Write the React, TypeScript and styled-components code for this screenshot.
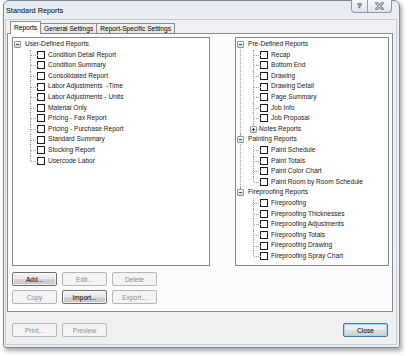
import React from 'react';
import styled, { createGlobalStyle, css } from 'styled-components';

const ROW = 10.6;
const FONT = '"Liberation Sans", Arial, sans-serif';

const Global = createGlobalStyle`
  html, body { margin: 0; padding: 0; background: #ffffff; }
  body { width: 408px; height: 356px; overflow: hidden; font-family: ${FONT}; }
  * { box-sizing: border-box; }
`;

const Window = styled.div`
  margin-left: 3px;
  width: 397px;
  height: 348px;
  border: 1px solid #7d8a97;
  border-radius: 6px 6px 3px 3px;
  background: linear-gradient(#e3eaf1, #edf1f5 22px, #eef1f4);
  box-shadow: 2px 3px 4px rgba(0, 0, 0, 0.35);
  display: flex;
  flex-direction: column;
  padding: 0 3px 3px 2px;
`;

const TitleBar = styled.div`
  height: 19px;
  display: flex;
  align-items: flex-start;
  flex-shrink: 0;
`;

const Title = styled.div`
  align-self: center;
  font-size: 7.3px;
  color: #000;
  padding-left: 0;
  margin-top: 0;
`;

const CaptionButtons = styled.div`
  display: flex;
  margin: -1px 4px 0 auto;
  height: 13px;
  border: 1px solid #8e9baa;
  border-top: none;
  border-radius: 0 0 4px 4px;
  overflow: hidden;
  background: linear-gradient(#f6f8fb, #dde4eb);
`;

const CaptionButton = styled.div<{ $w: number; $sep?: boolean }>`
  width: ${p => p.$w}px;
  height: 100%;
  display: flex;
  align-items: center;
  justify-content: center;
  ${p => p.$sep && css`border-right: 1px solid #8e9baa;`}
`;

const HelpGlyph = styled.span`
  font-size: 8px;
  font-weight: bold;
  color: #f4f6f8;
  -webkit-text-stroke: 0.7px #6d7882;
  line-height: 1;
`;

const Client = styled.div`
  flex: 1;
  background: #f0f0f0;
  box-shadow: 0 0 0 1px #c3ccd5;
  display: flex;
  flex-direction: column;
`;

const TabControl = styled.div`
  margin: 1px 3px 0 1px;
  display: flex;
  flex-direction: column;
`;

const TabStrip = styled.div`
  height: 12px;
  display: flex;
  align-items: flex-end;
  padding-left: 3px;
  position: relative;
  z-index: 1;
`;

const Tab = styled.div<{ $active?: boolean }>`
  font-size: 6.6px;
  color: #000;
  padding: 0 3px;
  border: 1px solid #898c95;
  border-bottom: none;
  margin-left: -1px;
  display: flex;
  align-items: center;
  white-space: nowrap;
  ${p => p.$active
    ? css`
        height: 13px;
        margin-left: 0;
        margin-bottom: -1px;
        background: #fcfcfc;
        position: relative;
        z-index: 2;
        padding-bottom: 1px;
      `
    : css`
        height: 10px;
        background: linear-gradient(#f3f3f3, #e4e4e4);
      `}
`;

const Panel = styled.div`
  height: 279px;
  border: 1px solid #898c95;
  background: #fcfcfc;
  padding: 3px 3px 7px 4px;
  display: flex;
  flex-direction: column;
`;

const TreeGrid = styled.div`
  height: 229px;
  display: grid;
  grid-template-columns: 198px 1fr;
  column-gap: 25px;
`;

const TreeBox = styled.div`
  background: #fff;
  border: 1px solid #828790;
  padding-top: 1px;
  overflow: hidden;
  font-size: 6.6px;
  color: #1a1a1a;
`;

const Branch = styled.div<{ $next?: boolean }>`
  position: relative;
  ${p => p.$next && css`
    &::before {
      content: '';
      position: absolute;
      left: 4px;
      top: ${ROW / 2}px;
      bottom: 0;
      border-left: 1px dotted #a0a0a0;
    }
  `}
`;

const RowBase = styled.div`
  position: relative;
  height: ${ROW}px;
  display: flex;
  align-items: center;
  white-space: pre;
  line-height: 1;
`;

const RootRow = styled(RowBase)<{ $prev?: boolean }>`
  padding-left: 1px;
  ${p => p.$prev && css`
    &::before {
      content: '';
      position: absolute;
      left: 4px;
      top: 0;
      height: 50%;
      border-left: 1px dotted #a0a0a0;
    }
  `}
`;

const ChildRow = styled(RowBase)<{ $folder?: boolean }>`
  padding-left: ${p => (p.$folder ? 14 : 24)}px;
`;

const Connector = styled.span<{ $last?: boolean }>`
  position: absolute;
  left: 17px;
  top: 0;
  height: ${p => (p.$last ? '50%' : '100%')};
  border-left: 1px dotted #a0a0a0;
  &::after {
    content: '';
    position: absolute;
    left: 0;
    top: ${ROW / 2}px;
    width: 7px;
    border-top: 1px dotted #a0a0a0;
  }
`;

const Expander = styled.span<{ $open?: boolean }>`
  position: relative;
  z-index: 1;
  width: 7px;
  height: 7px;
  flex-shrink: 0;
  border: 1px solid #989898;
  border-radius: 1px;
  background: linear-gradient(#ffffff, #d6d6d6);
  &::before {
    content: '';
    position: absolute;
    left: 1px;
    top: 2px;
    width: 3px;
    height: 1px;
    background: #2c4a7e;
  }
  ${p => !p.$open && css`
    &::after {
      content: '';
      position: absolute;
      left: 2px;
      top: 1px;
      width: 1px;
      height: 3px;
      background: #2c4a7e;
    }
  `}
`;

const Check = styled.span`
  width: 8px;
  height: 8px;
  flex-shrink: 0;
  border: 1.4px solid #1c1c1c;
  background: #fff;
`;

const Label = styled.span<{ $gap: number }>`
  margin-left: ${p => p.$gap}px;
`;

const ButtonGrid = styled.div`
  margin-top: 6px;
  display: grid;
  grid-template-columns: repeat(3, 45px);
  grid-auto-rows: 14px;
  column-gap: 5px;
  row-gap: 4px;
`;

const Button = styled.button<{ $variant?: 'normal' | 'disabled' | 'default' }>`
  width: 45px;
  height: 14px;
  padding: 0;
  font-family: ${FONT};
  font-size: 6.6px;
  border-radius: 2px;
  display: flex;
  align-items: center;
  justify-content: center;
  ${p => {
    switch (p.$variant) {
      case 'disabled':
        return css`
          border: 1px solid #b3b7ba;
          background: #f4f4f4;
          color: #8b8b8b;
        `;
      case 'default':
        return css`
          border: 1px solid #3c7fb1;
          background: linear-gradient(#f3f3f3 0%, #ebebeb 50%, #dddddd 51%, #d1d1d1 100%);
          box-shadow: inset 0 0 0 1px #9fd8f5;
          color: #000;
        `;
      default:
        return css`
          border: 1px solid #707070;
          background: linear-gradient(#f2f2f2 0%, #e6e6e6 50%, #d4d4d4 51%, #c6c6c6 100%);
          box-shadow: inset 0 0 0 1px rgba(255, 255, 255, 0.7);
          color: #000;
        `;
    }
  }}
`;

const Footer = styled.div`
  margin-top: 11px;
  display: flex;
  gap: 5px;
  padding: 0 8px 0 6px;
`;

const Spacer = styled.div`
  flex: 1;
`;

type ChildNode = { label: string; folder?: boolean };
type BranchNode = { label: string; children: ChildNode[] };

const leftTree: BranchNode[] = [
  {
    label: 'User-Defined Reports',
    children: [
      'Condition Detail Report',
      'Condition Summary',
      'Consolidated Report',
      'Labor Adjustments  -Time',
      'Labor Adjustments - Units',
      'Material Only',
      'Pricing - Fax Report',
      'Pricing - Purchase Report',
      'Standard Summary',
      'Stocking Report',
      'Usercode Labor',
    ].map(label => ({ label })),
  },
];

const rightTree: BranchNode[] = [
  {
    label: 'Pre-Defined Reports',
    children: [
      ...['Recap', 'Bottom End', 'Drawing', 'Drawing Detail', 'Page Summary', 'Job Info', 'Job Proposal'].map(
        label => ({ label })
      ),
      { label: 'Notes Reports', folder: true },
    ],
  },
  {
    label: 'Painting Reports',
    children: ['Paint Schedule', 'Paint Totals', 'Paint Color Chart', 'Paint Room by Room Schedule'].map(
      label => ({ label })
    ),
  },
  {
    label: 'Fireproofing Reports',
    children: [
      'Fireproofing',
      'Fireproofing Thicknesses',
      'Fireproofing Adjustments',
      'Fireproofing Totals',
      'Fireproofing Drawing',
      'Fireproofing Spray Chart',
    ].map(label => ({ label })),
  },
];

function Tree({ branches }: { branches: BranchNode[] }) {
  return (
    <TreeBox>
      {branches.map((b, i) => (
        <Branch key={b.label} $next={i < branches.length - 1}>
          <RootRow $prev={i > 0}>
            <Expander $open />
            <Label $gap={4}>{b.label}</Label>
          </RootRow>
          {b.children.map((c, j) => (
            <ChildRow key={c.label} $folder={c.folder}>
              <Connector $last={j === b.children.length - 1} />
              {c.folder ? <Expander /> : <Check />}
              <Label $gap={c.folder ? 2 : 3}>{c.label}</Label>
            </ChildRow>
          ))}
        </Branch>
      ))}
    </TreeBox>
  );
}

export default function App() {
  return (
    <>
      <Global />
      <Window>
        <TitleBar>
          <Title>Standard Reports</Title>
          <CaptionButtons>
            <CaptionButton $w={16} $sep>
              <HelpGlyph>?</HelpGlyph>
            </CaptionButton>
            <CaptionButton $w={23}>
              <svg width="9" height="8" viewBox="0 0 9 8">
                <path d="M1.5 1 L7.5 7 M7.5 1 L1.5 7" stroke="#6d7882" strokeWidth="2.6" strokeLinecap="square" />
                <path d="M1.5 1 L7.5 7 M7.5 1 L1.5 7" stroke="#f4f6f8" strokeWidth="1" strokeLinecap="square" />
              </svg>
            </CaptionButton>
          </CaptionButtons>
        </TitleBar>
        <Client>
          <TabControl>
            <TabStrip>
              <Tab $active>Reports</Tab>
              <Tab>General Settings</Tab>
              <Tab>Report-Specific Settings</Tab>
            </TabStrip>
            <Panel>
              <TreeGrid>
                <Tree branches={leftTree} />
                <Tree branches={rightTree} />
              </TreeGrid>
              <ButtonGrid>
                <Button>Add...</Button>
                <Button $variant="disabled">Edit...</Button>
                <Button $variant="disabled">Delete</Button>
                <Button $variant="disabled">Copy</Button>
                <Button>Import...</Button>
                <Button $variant="disabled">Export...</Button>
              </ButtonGrid>
            </Panel>
          </TabControl>
          <Footer>
            <Button $variant="disabled">Print...</Button>
            <Button $variant="disabled">Preview</Button>
            <Spacer />
            <Button $variant="default">Close</Button>
          </Footer>
        </Client>
      </Window>
    </>
  );
}
